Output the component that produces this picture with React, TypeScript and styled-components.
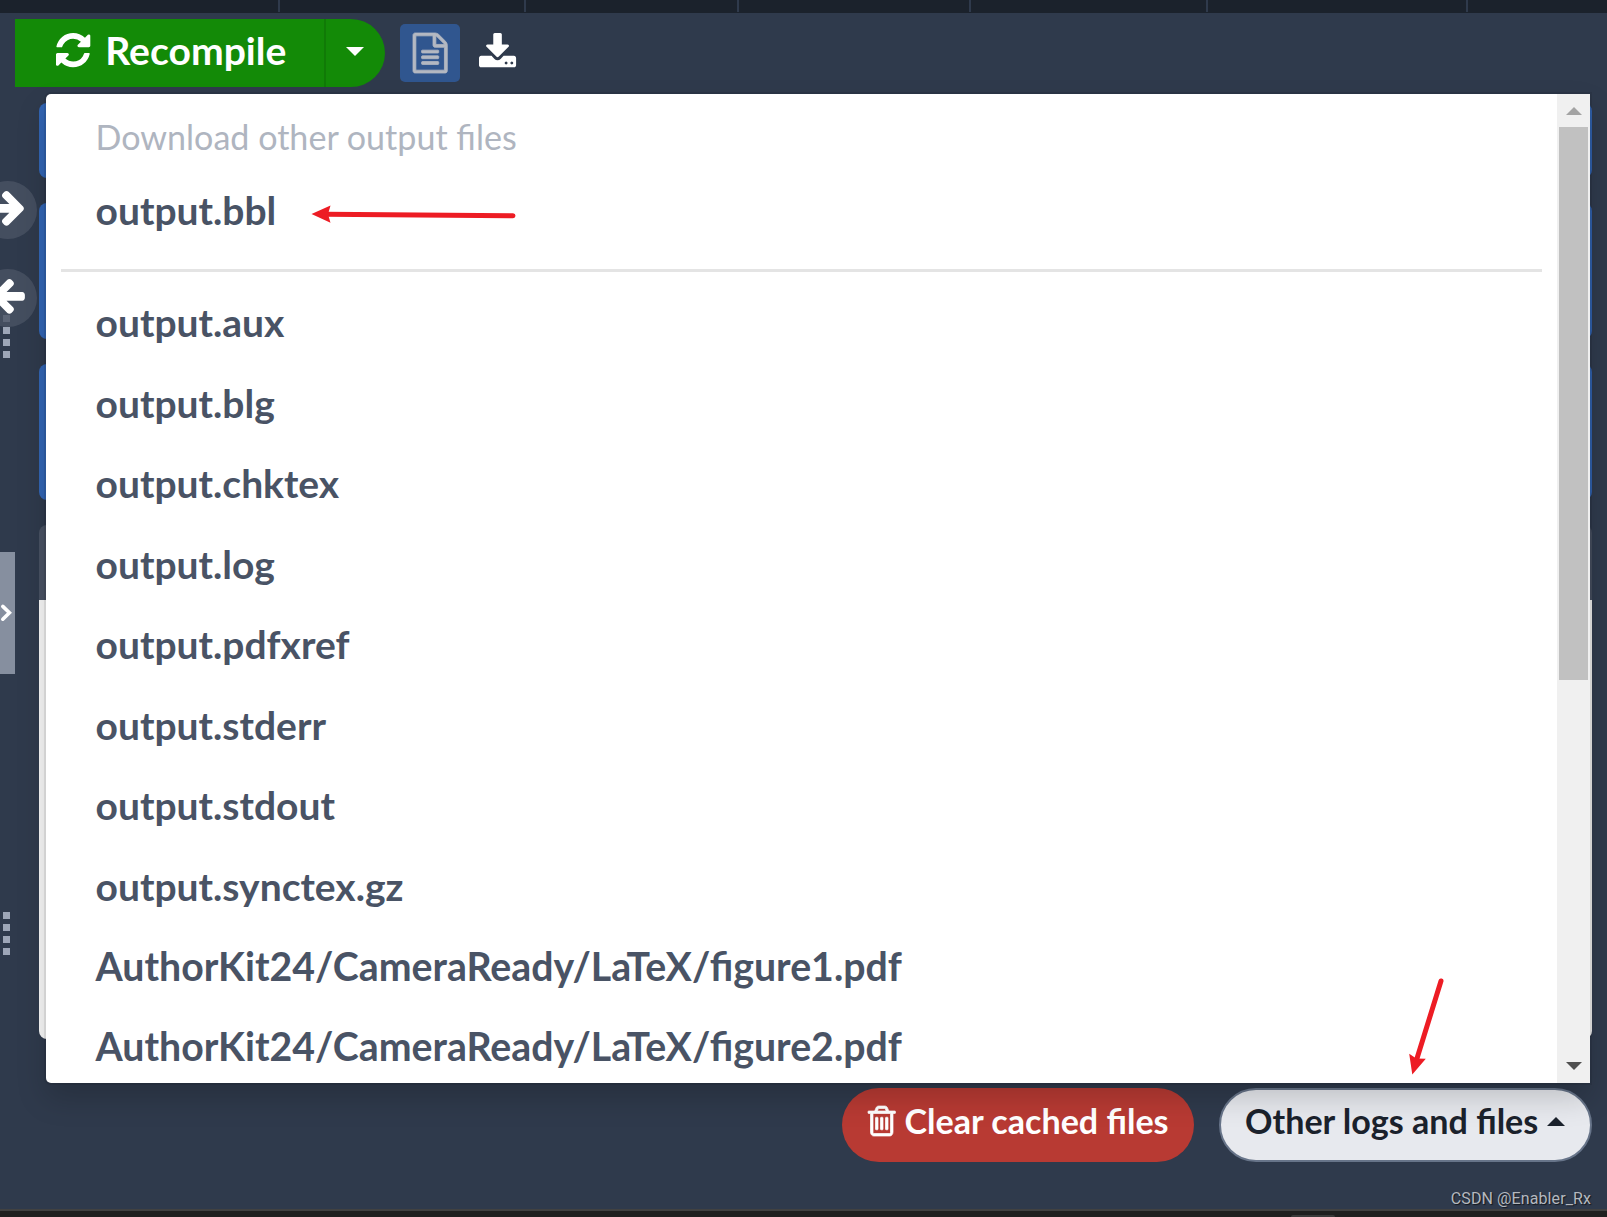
import React from 'react'
import styled, { createGlobalStyle } from 'styled-components'

const GlobalStyle = createGlobalStyle`
    * {
        box-sizing: border-box;
    }

    body {
        margin: 0;
        overflow: hidden;
        background: #2f3a4c;
        font-family: Lato, 'Liberation Sans', sans-serif;
    }

    button {
        border: 0;
        padding: 0;
        font-family: inherit;
    }
`

const icons = {
    refresh: {
        box: '128 128 1536 1536',
        d: 'M1639 1056q0 5-1 7-64 268-268 434.5t-478 166.5q-146 0-282.5-55t-243.5-157l-129 129q-19 19-45 19t-45-19-19-45v-448q0-26 19-45t45-19h448q26 0 45 19t19 45-19 45l-137 137q71 66 161 102t187 36q134 0 250-65t186-179q11-17 53-117 8-23 30-23h192q13 0 22.5 9.5t9.5 22.5zm25-800v448q0 26-19 45t-45 19h-448q-26 0-45-19t-19-45 19-45l138-138q-148-137-349-137-134 0-250 65t-186 179q-11 17-53 117-8 23-30 23h-199q-13 0-22.5-9.5t-9.5-22.5v-7q65-268 270-434.5t480-166.5q146 0 284 55.5t245 156.5l130-129q19-19 45-19t45 19 19 45z',
    },
    file: {
        box: '128 0 1536 1792',
        d: 'M1596 380q28 28 48 76t20 88v1152q0 40-28 68t-68 28h-1344q-40 0-68-28t-28-68v-1600q0-40 28-68t68-28h896q40 0 88 20t76 48zm-444-244v376h376q-10-29-22-41l-313-313q-12-12-41-22zm384 1528v-1024h-416q-40 0-68-28t-28-68v-416h-768v1536h1280zm-1024-864q0-14 9-23t23-9h704q14 0 23 9t9 23v64q0 14-9 23t-23 9h-704q-14 0-23-9t-9-23v-64zm736 224q14 0 23 9t9 23v64q0 14-9 23t-23 9h-704q-14 0-23-9t-9-23v-64q0-14 9-23t23-9h704zm0 256q14 0 23 9t9 23v64q0 14-9 23t-23 9h-704q-14 0-23-9t-9-23v-64q0-14 9-23t23-9h704z',
    },
    download: {
        box: '64 0 1664 1536',
        d: 'M1344 1344q0-26-19-45t-45-19-45 19-19 45 19 45 45 19 45-19 19-45zm256 0q0-26-19-45t-45-19-45 19-19 45 19 45 45 19 45-19 19-45zm128-224v320q0 40-28 68t-68 28h-1472q-40 0-68-28t-28-68v-320q0-40 28-68t68-28h465l135 136q58 56 136 56t136-56l136-136h464q40 0 68 28t28 68zm-325-569q17 41-14 70l-448 448q-18 19-45 19t-45-19l-448-448q-31-29-14-70 17-39 59-39h256v-448q0-26 19-45t45-19h256q26 0 45 19t19 45v448h256q42 0 59 39z',
    },
    trash: {
        box: '192 128 1408 1536',
        d: 'M704 736v576q0 14-9 23t-23 9h-64q-14 0-23-9t-9-23v-576q0-14 9-23t23-9h64q14 0 23 9t9 23zm256 0v576q0 14-9 23t-23 9h-64q-14 0-23-9t-9-23v-576q0-14 9-23t23-9h64q14 0 23 9t9 23zm256 0v576q0 14-9 23t-23 9h-64q-14 0-23-9t-9-23v-576q0-14 9-23t23-9h64q14 0 23 9t9 23zm128 724v-948h-896v948q0 22 7 40.5t14.5 27 10.5 8.5h832q3 0 10.5-8.5t14.5-27 7-40.5zm-672-1076h448l-48-117q-7-9-17-11h-317q-10 2-17 11zm928 32v64q0 14-9 23t-23 9h-96v948q0 83-47 143.5t-113 60.5h-832q-66 0-113-58.5t-47-141.5v-952h-96q-14 0-23-9t-9-23v-64q0-14 9-23t23-9h309l70-167q15-37 54-63t79-26h320q40 0 79 26t54 63l70 167h309q14 0 23 9t9 23z',
    },
    arrow: {
        box: '128 181 1472 1558',
        d: 'M1600 960q0 54-37 91l-651 651q-39 37-91 37-51 0-90-37l-75-75q-38-38-38-91t38-91l293-293h-704q-52 0-84.5-37.5t-32.5-90.5v-128q0-53 32.5-90.5t84.5-37.5h704l-293-294q-38-36-38-90t38-90l75-75q38-38 90-38 53 0 91 38l651 651q37 35 37 90z',
    },
}

type IconProps = { name: keyof typeof icons; width: number; height: number; bold?: boolean }

function Icon({ name, width, height, bold }: IconProps) {
    return (
        <svg
            width={width}
            height={height}
            viewBox={icons[name].box}
            fill="currentColor"
            stroke="currentColor"
            strokeWidth={bold ? 36 : 0}
            overflow="visible"
        >
            <path d={icons[name].d} />
        </svg>
    )
}

const Page = styled.div`
    position: relative;
    display: flex;
    flex-direction: column;
    width: 1607px;
    height: 1217px;
    overflow: hidden;
    background: #2f3a4c;
`

const Ruler = styled.div`
    display: flex;
    flex: none;
    height: 13px;
    padding-bottom: 1px;
    background: #1b222c;
`

const RulerCell = styled.div<{ $width: number }>`
    width: ${(p) => p.$width}px;
    border-right: 2px solid #2f3a4c;
`

const Toolbar = styled.div`
    display: flex;
    flex: none;
    align-items: flex-start;
    height: 90px;
    padding: 6px 0 0 15px;
    color: #fff;
`

const RecompileGroup = styled.div`
    display: flex;
    height: 68px;
    border-radius: 0 34px 34px 0;
    overflow: hidden;
    background: #138a07;
`

const RecompileButton = styled.button`
    display: flex;
    align-items: center;
    gap: 15px;
    width: 311px;
    padding: 0 0 6px 41px;
    border-right: 2px solid #107a06;
    background: none;
    color: #fff;
    font-size: 39.1px;
    font-weight: 700;
    line-height: 50px;
`

const RecompileToggle = styled.button`
    display: flex;
    align-items: center;
    justify-content: center;
    width: 59px;
    padding: 0 2px 3px 0;
    background: none;
`

const Caret = styled.span<{ $up?: boolean; $color: string; $size?: number }>`
    width: 0;
    height: 0;
    border: ${(p) => p.$size || 9}px solid transparent;
    border-top-color: ${(p) => (p.$up ? 'transparent' : p.$color)};
    border-bottom-color: ${(p) => (p.$up ? p.$color : 'transparent')};
    border-${(p) => (p.$up ? 'top' : 'bottom')}-width: 0;
`

const LogsToggle = styled.button`
    display: flex;
    align-items: center;
    justify-content: center;
    width: 60px;
    height: 58px;
    margin: 5px 19px 0 15px;
    border-radius: 5px;
    background: #30568f;
    color: #b3b8c2;
`

const DownloadButton = styled.button`
    display: flex;
    margin-top: 14px;
    background: none;
    color: #fff;
`

const LogEntries = styled.div`
    display: flex;
    flex: none;
    flex-direction: column;
    gap: 25px;
    height: 936px;
    margin: 0 15px 0 39px;
`

const LogEntry = styled.div<{ $height: number }>`
    height: ${(p) => p.$height}px;
    border-radius: 8px;
    background: #3265b4;
`

const RawLog = styled.div`
    flex: 1;
    border-top: 75px solid #495263;
    border-radius: 8px;
    background: #f8f8f8;
`

const Actions = styled.div`
    display: flex;
    flex: none;
    justify-content: flex-end;
    gap: 25px;
    padding: 49px 15px 0 0;
    height: 170px;
`

const PillButton = styled.button<{ $danger?: boolean }>`
    display: flex;
    align-items: center;
    gap: 9px;
    width: ${(p) => (p.$danger ? 352 : 373)}px;
    height: 74px;
    padding: 0 0 8px ${(p) => (p.$danger ? 26 : 24)}px;
    border: ${(p) => (p.$danger ? '0' : '2px solid #677489')};
    border-radius: 37px;
    background: ${(p) => (p.$danger ? '#b83a33' : '#e7e9ee')};
    color: ${(p) => (p.$danger ? '#fff' : '#1b222c')};
    font-size: 34.1px;
    font-weight: 700;
    line-height: 50px;
    white-space: nowrap;
`

const BottomBar = styled.div`
    display: flex;
    flex: 1;
    align-items: flex-end;
    justify-content: flex-end;
    padding-right: 272px;
    border-top: 2px solid #414141;
    background: #1f1f1f;
`

const BottomTab = styled.div`
    width: 44px;
    height: 2px;
    border-radius: 4px 4px 0 0;
    background: #3a3a3a;
`

const SyncButton = styled.button<{ $top: number; $back?: boolean }>`
    position: absolute;
    top: ${(p) => p.$top}px;
    left: -21px;
    display: flex;
    align-items: center;
    width: 58px;
    height: 58px;
    padding: 0 0 ${(p) => (p.$back ? 4 : 3)}px ${(p) => (p.$back ? 13 : 12)}px;
    border-radius: 50%;
    background: rgba(83, 91, 108, 0.6);
    color: #fff;

    svg {
        transform: ${(p) => (p.$back ? 'scaleX(-1)' : 'none')};
    }
`

const Grip = styled.div<{ $top: number }>`
    position: absolute;
    top: ${(p) => p.$top}px;
    left: 3px;
    display: flex;
    flex-direction: column;
    gap: 5px;
`

const GripDot = styled.span<{ $dim?: boolean }>`
    width: 7px;
    height: 7px;
    background: ${(p) => (p.$dim ? '#5c6576' : '#9da6b7')};
`

const PaneHandle = styled.div`
    position: absolute;
    top: 552px;
    left: 0;
    display: flex;
    align-items: center;
    width: 15px;
    height: 122px;
    background: #868f9f;
`

const Menu = styled.div`
    position: absolute;
    top: 94px;
    left: 46px;
    display: flex;
    width: 1544px;
    height: 989px;
    border-radius: 5px 0 0 5px;
    overflow: hidden;
    background: #fff;
    box-shadow: 0 15px 30px rgba(0, 0, 0, 0.175), 0 0 0 2px rgba(0, 0, 0, 0.08);
`

const MenuList = styled.div`
    flex: 1;
    padding-top: 13px;
    overflow: hidden;
`

const MenuHeader = styled.div`
    height: 63px;
    padding-left: 49.5px;
    color: #afb5c0;
    font-size: 34.1px;
    line-height: 59px;
`

const MenuItem = styled.div<{ $nested?: boolean }>`
    height: 80.45px;
    padding-left: 49.5px;
    color: #495365;
    font-size: ${(p) => (p.$nested ? 39.25 : 39)}px;
    font-weight: 700;
    line-height: 80.45px;
    white-space: nowrap;
`

const MenuDivider = styled.div`
    height: 3px;
    margin: 19px 15px 10px;
    background: #e4e4e4;
`

const Scrollbar = styled.div`
    display: flex;
    flex-direction: column;
    justify-content: space-between;
    align-items: center;
    width: 33px;
    padding: 13px 0;
    background: #f0f0f0;
`

const ScrollTrack = styled.div`
    flex: 1;
    width: 29px;
    margin: 12px 0;
`

const ScrollThumb = styled.div`
    height: 553px;
    background: #c1c1c1;
`

const Annotations = styled.svg`
    position: absolute;
    top: 0;
    left: 0;
    pointer-events: none;
`

const Watermark = styled.div`
    position: absolute;
    right: 16px;
    bottom: 8px;
    color: #b4b8bf;
    font-family: Roboto, sans-serif;
    font-size: 16px;
    line-height: 20px;
    letter-spacing: 0.1px;
    text-shadow: 1px 1px 1px rgba(0, 0, 0, 0.6);
`

const cells = [280, 246, 213, 232, 237, 260]

const files = [
    'output.aux',
    'output.blg',
    'output.chktex',
    'output.log',
    'output.pdfxref',
    'output.stderr',
    'output.stdout',
    'output.synctex.gz',
    'AuthorKit24/CameraReady/LaTeX/figure1.pdf',
    'AuthorKit24/CameraReady/LaTeX/figure2.pdf',
]

export default function App() {
    return (
        <>
            <GlobalStyle />
            <Page>
                <Ruler>
                    {cells.map((width, i) => (
                        <RulerCell key={i} $width={width} />
                    ))}
                </Ruler>
                <Toolbar>
                    <RecompileGroup>
                        <RecompileButton>
                            <Icon name="refresh" width={34.3} height={34.3} />
                            Recompile
                        </RecompileButton>
                        <RecompileToggle>
                            <Caret $color="#fff" />
                        </RecompileToggle>
                    </RecompileGroup>
                    <LogsToggle>
                        <Icon name="file" width={34.3} height={40} bold />
                    </LogsToggle>
                    <DownloadButton>
                        <Icon name="download" width={37.1} height={34.3} />
                    </DownloadButton>
                </Toolbar>
                <LogEntries>
                    <LogEntry $height={75} />
                    <LogEntry $height={136} />
                    <LogEntry $height={136} />
                    <RawLog />
                </LogEntries>
                <Actions>
                    <PillButton $danger>
                        <Icon name="trash" width={27.5} height={30} bold />
                        Clear cached files
                    </PillButton>
                    <PillButton>
                        Other logs and files
                        <Caret $up $color="#1b222c" />
                    </PillButton>
                </Actions>
                <BottomBar>
                    <BottomTab />
                </BottomBar>

                <SyncButton $top={181}>
                    <Icon name="arrow" width={32.9} height={34.8} />
                </SyncButton>
                <SyncButton $top={269} $back>
                    <Icon name="arrow" width={32.9} height={34.8} />
                </SyncButton>
                <Grip $top={315}>
                    <GripDot $dim />
                    <GripDot />
                    <GripDot />
                    <GripDot />
                </Grip>
                <Grip $top={912}>
                    <GripDot />
                    <GripDot />
                    <GripDot />
                    <GripDot />
                </Grip>
                <PaneHandle>
                    <svg width="15" height="20" viewBox="0 0 15 20" fill="none" stroke="#fff" strokeWidth="3.6">
                        <path d="M2.8 3.4 9.4 9.8 2.8 16.2" strokeLinecap="round" />
                    </svg>
                </PaneHandle>

                <Menu>
                    <MenuList>
                        <MenuHeader>Download other output files</MenuHeader>
                        <MenuItem>output.bbl</MenuItem>
                        <MenuDivider />
                        {files.map((file) => (
                            <MenuItem key={file} $nested={file.includes('/')}>
                                {file}
                            </MenuItem>
                        ))}
                    </MenuList>
                    <Scrollbar>
                        <Caret $up $color="#a3a3a3" $size={8} />
                        <ScrollTrack>
                            <ScrollThumb />
                        </ScrollTrack>
                        <Caret $color="#505050" $size={8} />
                    </Scrollbar>
                </Menu>

                <Annotations width="1607" height="1217" fill="#ed1c24" stroke="#ed1c24">
                    <path d="M326 214.3 513 215.8" strokeWidth="5" strokeLinecap="round" />
                    <path d="M311.5 214 330.5 205.5 328 214.2 330.5 222.8z" stroke="none" />
                    <path d="M1441 981 1416.5 1060" strokeWidth="5" strokeLinecap="round" />
                    <path d="M1412.3 1074.5 1409.2 1053.8 1416.3 1058.5 1425.8 1058.7z" stroke="none" />
                </Annotations>
                <Watermark>CSDN @Enabler_Rx</Watermark>
            </Page>
        </>
    )
}
